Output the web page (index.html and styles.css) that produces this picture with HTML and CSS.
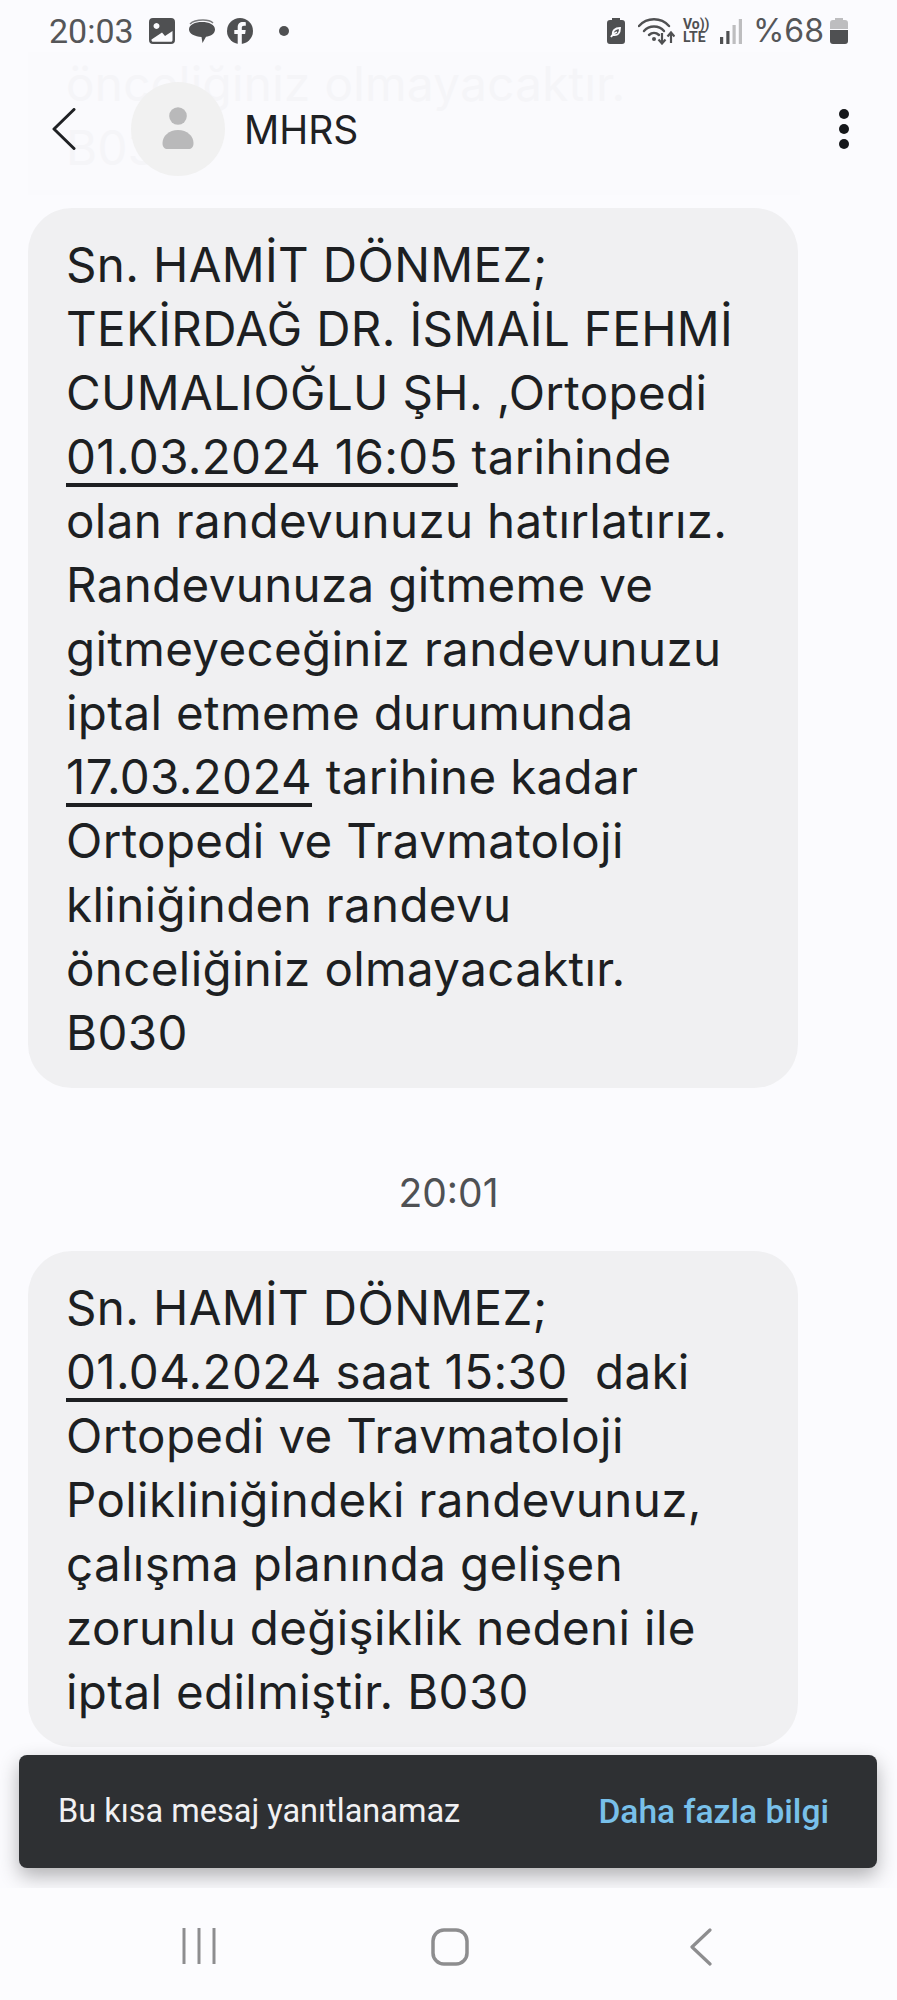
FILE: index.html
```html
<!DOCTYPE html>
<html lang="tr">
<head>
<meta charset="utf-8">
<title>MHRS</title>
<link rel="stylesheet" href="styles.css">
</head>
<body>
<div class="screen">
  <div class="statusbar">
    <div class="status-left">
      <span class="clock">20:03</span>
      <svg class="ic ic-img" viewBox="0 0 26 26"><path fill="#4f5052" fill-rule="evenodd" d="M4 0h18a4 4 0 0 1 4 4v18a4 4 0 0 1-4 4H4a4 4 0 0 1-4-4V4a4 4 0 0 1 4-4zM7.500 5a3 3 0 1 0 .01 0zM2.500 21.500v.8c0 .9.700 1.500 1.500 1.500h18c.8 0 1.500-.6 1.500-1.500V13l-7.500 5-3-3.500z"/></svg>
      <svg class="ic ic-chat" viewBox="0 0 26 26"><path fill="none" stroke="#7a7b7d" stroke-width="1.500" d="M1 6c3-3 8-4 13-4 4 0 8 1 10 3"/><path fill="#4f5052" d="M13 4c7 0 13 2.500 13 7.500 0 4.500-5 7-9 7.200L13.500 25l-1-6C6 18.500 0 16 0 11.500 0 6.500 6 4 13 4z"/></svg>
      <svg class="ic ic-fb" viewBox="0 0 26 26"><circle cx="13" cy="13" r="13" fill="#4f5052"/><path fill="#fbfbfe" d="M14.800 26V16h3.300l.6-4h-3.900V9.800c0-1.300.6-2.100 2.200-2.100h1.800V4.300c-.9-.1-1.900-.2-2.900-.2-3.200 0-5.200 1.900-5.200 5.200V12H7.300v4h3.400v10z"/></svg>
      <span class="status-dot"></span>
    </div>
    <div class="status-right">
      <svg class="ic ic-leaf" viewBox="0 0 18 26"><path fill="#4f5052" d="M5 0h8v2h2a3 3 0 0 1 3 3v18a3 3 0 0 1-3 3H3a3 3 0 0 1-3-3V5a3 3 0 0 1 3-3h2z"/><path fill="none" stroke="#fbfbfe" stroke-width="1.800" d="M4 19c1-2 3-4 6-5M6 17c-1-4 2-7 7-7 0 5-2 8-7 7z"/></svg>
      <svg class="ic ic-wifi" viewBox="0 0 37 28"><g fill="none" stroke="#4f5052" stroke-width="2.400" stroke-linecap="round"><path d="M1 9C9 0 23 0 31 9"/><path d="M6 14c5-6 15-6 20 0"/><path d="M11 18c3-2.800 7-2.800 10 0"/></g><circle cx="16" cy="22" r="2" fill="#4f5052"/><path fill="none" stroke="#4f5052" stroke-width="2.200" d="M24 16v10M20.500 22.500l3.500 4 3.500-4M33 26V16M29.500 19.500l3.500-4 3.500 4"/></svg>
      <span class="volte"><span class="volte-line">Vo))</span><span class="volte-line">LTE</span></span>
      <svg class="ic ic-signal" viewBox="0 0 22 25"><rect x="0" y="18" width="3.200" height="7" fill="#4f5052"/><rect x="6.300" y="12" width="3.200" height="13" fill="#4f5052"/><rect x="12.500" y="6" width="3.200" height="19" fill="#bdbdbf"/><rect x="18.800" y="0" width="3.200" height="25" fill="#bdbdbf"/></svg>
      <span class="percent">%68</span>
      <svg class="ic ic-batt" viewBox="0 0 18 26"><path fill="#bdbdbf" d="M5 0h8v2h2a3 3 0 0 1 3 3v6H0V5a3 3 0 0 1 3-3h2z"/><path fill="#4f5052" d="M0 12h18v11a3 3 0 0 1-3 3H3a3 3 0 0 1-3-3z"/></svg>
    </div>
  </div>

  <header class="appbar">
    <div class="ghost" aria-hidden="true">önceliğiniz olmayacaktır.<br>B030</div>
    <svg class="back" viewBox="0 0 24 42"><path fill="none" stroke="#1f2124" stroke-width="3" stroke-linecap="round" stroke-linejoin="round" d="M22 1.500 2 21l20 19.500"/></svg>
    <div class="avatar">
      <svg class="avatar-ic" viewBox="0 0 32 42"><circle cx="16" cy="9" r="8.800" fill="#b9b9ba"/><path fill="#b9b9ba" d="M16 23c9 0 15.500 6 15.500 13 0 4-2 6-5 6H5.500c-3 0-5-2-5-6 0-7 6.500-13 15.500-13z"/></svg>
    </div>
    <span class="title">MHRS</span>
    <span class="more"><i></i><i></i><i></i></span>
  </header>

  <main class="thread">
    <div class="bubble">Sn. HAMİT DÖNMEZ;<br>TEKİRDAĞ DR. İSMAİL FEHMİ<br>CUMALIOĞLU ŞH. ,Ortopedi<br><u>01.03.2024 16:05</u> tarihinde<br>olan randevunuzu hatırlatırız.<br>Randevunuza gitmeme ve<br>gitmeyeceğiniz randevunuzu<br>iptal etmeme durumunda<br><u>17.03.2024</u> tarihine kadar<br>Ortopedi ve Travmatoloji<br>kliniğinden randevu<br>önceliğiniz olmayacaktır.<br>B030</div>
    <div class="time">20:01</div>
    <div class="bubble">Sn. HAMİT DÖNMEZ;<br><u>01.04.2024 saat 15:30</u>&nbsp; daki<br>Ortopedi ve Travmatoloji<br>Polikliniğindeki randevunuz,<br>çalışma planında gelişen<br>zorunlu değişiklik nedeni ile<br>iptal edilmiştir. B030</div>
  </main>

  <div class="snackbar">
    <span class="snack-text">Bu kısa mesaj yanıtlanamaz</span>
    <span class="snack-link">Daha fazla bilgi</span>
  </div>

  <nav class="navbar">
    <svg class="nav-recent" viewBox="0 0 34 36"><path fill="none" stroke="#8d8d8f" stroke-width="3" d="M2 0v36M17 0v36M32 0v36"/></svg>
    <svg class="nav-home" viewBox="0 0 38 38"><rect x="2" y="2" width="34" height="34" rx="11" fill="none" stroke="#8d8d8f" stroke-width="3.500"/></svg>
    <svg class="nav-back" viewBox="0 0 22 38"><path fill="none" stroke="#8d8d8f" stroke-width="3.200" stroke-linejoin="round" stroke-linecap="round" d="M20 2 2 19l18 17"/></svg>
  </nav>
</div>
</body>
</html>
```

FILE: styles.css
```css
* { box-sizing: border-box; }
html, body { margin: 0; padding: 0; }
body { background: #fbfbfe; font-family: Inter, "Liberation Sans", sans-serif; }
.screen { position: relative; width: 897px; height: 2000px; overflow: hidden; background: #fbfbfe; display: flex; flex-direction: column; }

.statusbar { height: 55px; padding: 16px 49px 0 49px; display: flex; justify-content: space-between; align-items: flex-start; flex: none; }
.status-left, .status-right { display: flex; align-items: center; height: 30px; }
.ic { display: block; flex: none; }
.clock { font: 400 34px/30px Roboto, sans-serif; color: #555658; margin-right: 15px; }
.ic-img, .ic-chat, .ic-fb { width: 26px; height: 26px; margin-right: 13px; }
.ic-chat { margin-left: 1px; margin-right: 12px; }
.status-dot { width: 10px; height: 10px; border-radius: 50%; background: #4f5052; margin-left: 13px; }
.ic-leaf { width: 18px; height: 26px; margin-right: 13px; }
.ic-wifi { width: 37px; height: 28px; margin-right: 8px; }
.volte { display: flex; flex-direction: column; width: 26px; margin-right: 11px; font: 700 14px/13px Roboto, sans-serif; color: #4f5052; }
.volte-line { display: block; white-space: nowrap; }
.ic-signal { width: 22px; height: 25px; margin-right: 11px; }
.percent { font: 400 32px/30px Inter, sans-serif; color: #555658; margin-right: 6px; }
.ic-batt { width: 18px; height: 26px; }

.appbar { position: relative; height: 153px; flex: none; padding: 0 48px 5px 52px; display: flex; align-items: center; }
.ghost { position: absolute; left: 28px; top: -3px; width: 772px; height: 143px; padding-left: 38px; background: #fafafd; color: #f5f5f8; font-size: 47.5px; letter-spacing: .35px; line-height: 64px; }
.back { position: relative; width: 24px; height: 42px; flex: none; }
.avatar { position: relative; width: 94px; height: 94px; margin-left: 55px; border-radius: 50%; background: #f1f1f1; display: flex; align-items: center; justify-content: center; flex: none; }
.avatar-ic { width: 32px; height: 42px; margin-top: -2px; }
.title { position: relative; margin-left: 19px; font-size: 39px; color: #1f2124; line-height: 1; }
.more { position: relative; margin-left: auto; display: flex; flex-direction: column; gap: 5px; }
.more i { display: block; width: 10px; height: 10px; border-radius: 50%; background: #15171a; }

.thread { flex: 1; padding: 0 99px 0 28px; }
.bubble { background: #f0f0f2; border-radius: 44px; padding: 25px 20px 23px 38px; color: #1d1f22; font-size: 47.5px; letter-spacing: .35px; line-height: 64px; white-space: nowrap; }
.bubble u { text-decoration-thickness: 4px; text-underline-offset: 9px; }
.time { height: 163px; padding-top: 82px; text-align: center; font-size: 39px; line-height: 46px; color: #4f5154; margin-right: -71px; }

.snackbar { position: absolute; left: 19px; top: 1755px; width: 858px; height: 113px; background: #2e3033; border-radius: 8px; box-shadow: 0 8px 20px rgba(0,0,0,.3); padding: 0 48px 0 39px; display: flex; align-items: center; justify-content: space-between; font: 400 32.500px/1 Roboto, sans-serif; }
.snack-text { color: #f1f1f3; }
.snack-link { color: #78c0ea; font-size: 33.600px; font-weight: 500; }

.navbar { position: absolute; left: 0; right: 0; bottom: 0; height: 112px; background: #fcfcfe; }
.nav-recent { position: absolute; left: 182px; top: 40px; width: 34px; height: 36px; }
.nav-home { position: absolute; left: 431px; top: 40px; width: 38px; height: 38px; }
.nav-back { position: absolute; left: 690px; top: 40px; width: 22px; height: 38px; }
```
